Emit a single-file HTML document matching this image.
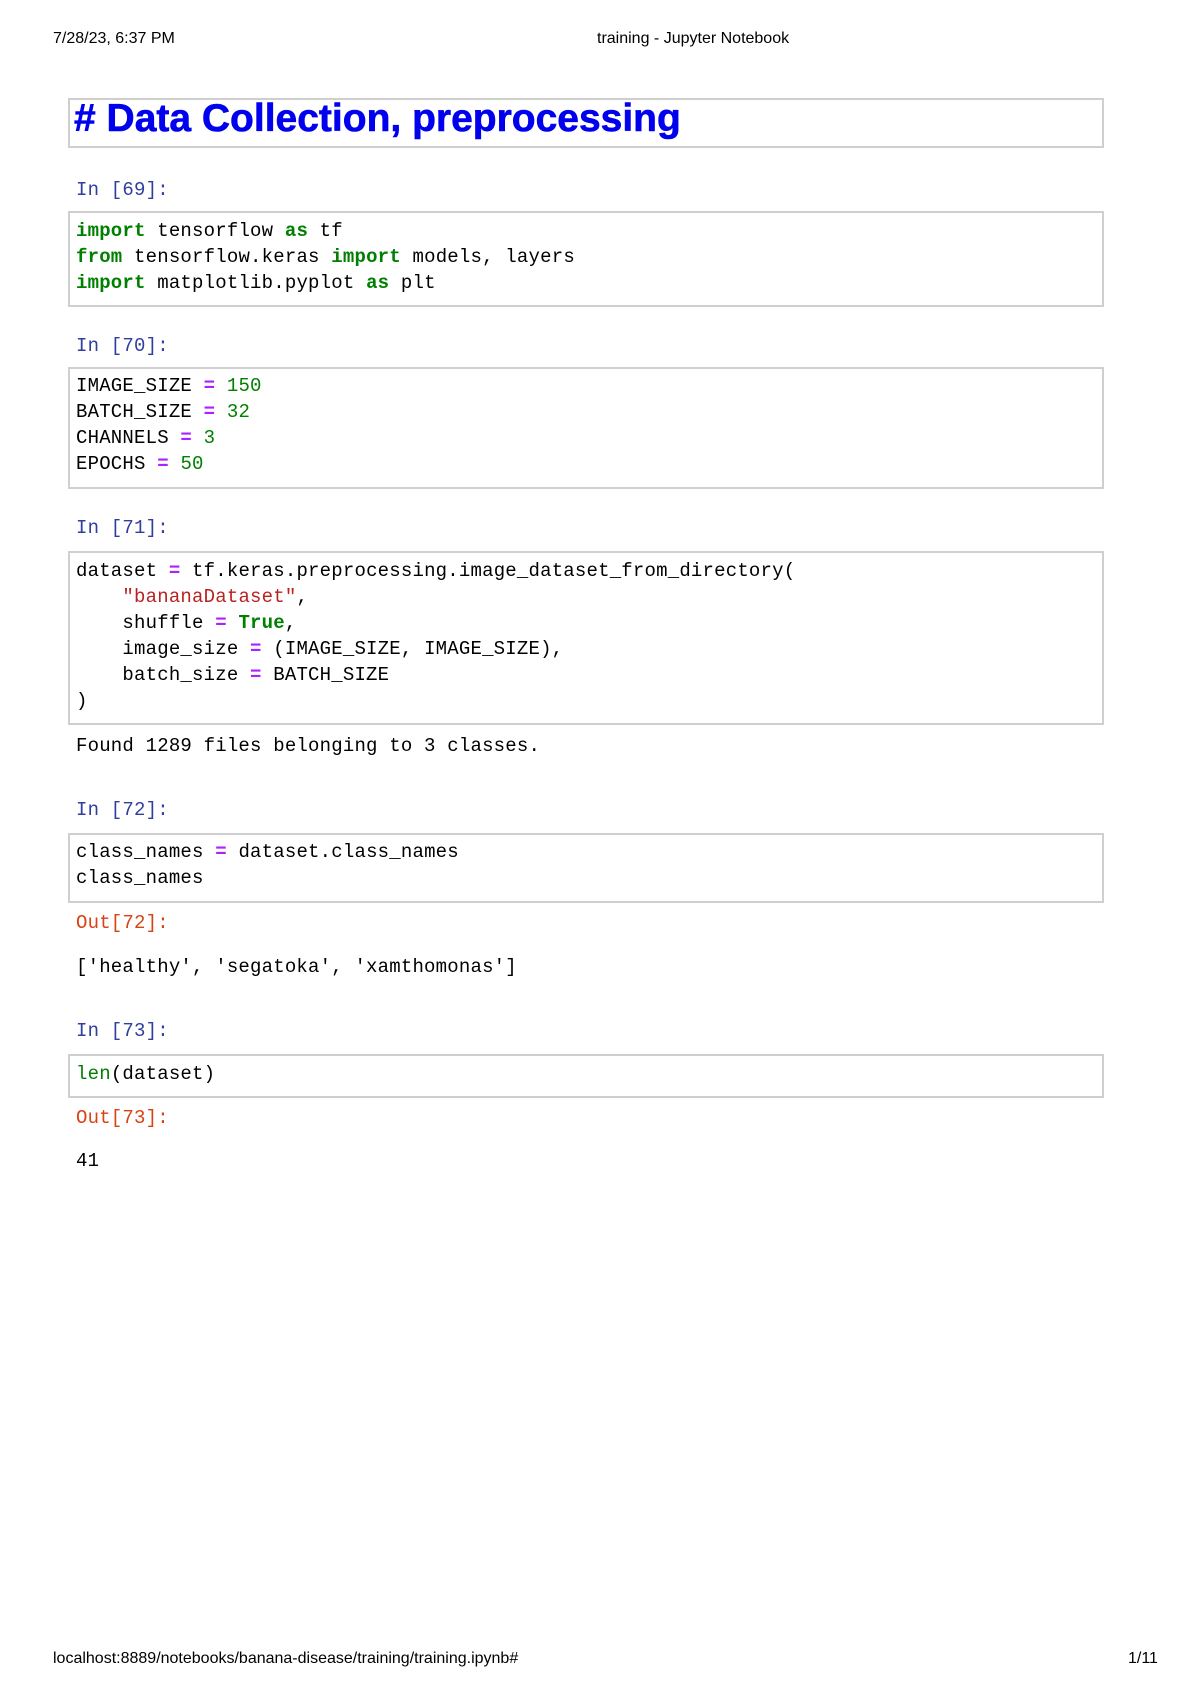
<!DOCTYPE html>
<html><head><meta charset="utf-8"><style>
body{margin:0;width:1200px;height:1698px;background:#fff;position:relative;font-family:"Liberation Sans",sans-serif;}
.a{position:absolute;white-space:pre;}
.hd{font-size:16px;color:#000;}
.box{position:absolute;left:68px;width:1036px;border:2px solid #cfcfcf;box-sizing:border-box;background:#fff;}
.m{font-family:"Liberation Mono",monospace;font-size:19px;letter-spacing:0.2px;line-height:26px;color:#000;}
.in{color:#303F9F;}
.out{color:#D84315;}
.k{color:#008000;font-weight:bold;}
.o{color:#AA22FF;font-weight:bold;}
.n{color:#008000;}
.s{color:#BA2121;}
</style></head><body>
<div class="a hd" style="left:53px;top:30px">7/28/23, 6:37 PM</div>
<div class="a hd" style="left:597px;top:30px">training - Jupyter Notebook</div>

<div class="box" style="top:98px;height:50px"></div>
<div class="a" style="left:74px;top:97px;font-size:39px;font-weight:bold;color:#0000ee;-webkit-text-stroke:0.6px #0000ee">#&nbsp;Data Collection, preprocessing</div>

<div class="a m in" style="left:76px;top:177px">In [69]:</div>
<div class="box" style="top:211px;height:96px"></div>
<div class="a m" style="left:76px;top:218px"><span class="k">import</span> tensorflow <span class="k">as</span> tf
<span class="k">from</span> tensorflow.keras <span class="k">import</span> models, layers
<span class="k">import</span> matplotlib.pyplot <span class="k">as</span> plt</div>

<div class="a m in" style="left:76px;top:333px">In [70]:</div>
<div class="box" style="top:367px;height:122px"></div>
<div class="a m" style="left:76px;top:373px">IMAGE_SIZE <span class="o">=</span> <span class="n">150</span>
BATCH_SIZE <span class="o">=</span> <span class="n">32</span>
CHANNELS <span class="o">=</span> <span class="n">3</span>
EPOCHS <span class="o">=</span> <span class="n">50</span></div>

<div class="a m in" style="left:76px;top:515px">In [71]:</div>
<div class="box" style="top:551px;height:174px"></div>
<div class="a m" style="left:76px;top:558px">dataset <span class="o">=</span> tf.keras.preprocessing.image_dataset_from_directory(
    <span class="s">"bananaDataset"</span>,
    shuffle <span class="o">=</span> <span class="k">True</span>,
    image_size <span class="o">=</span> (IMAGE_SIZE, IMAGE_SIZE),
    batch_size <span class="o">=</span> BATCH_SIZE
)</div>
<div class="a m" style="left:76px;top:733px">Found 1289 files belonging to 3 classes.</div>

<div class="a m in" style="left:76px;top:797px">In [72]:</div>
<div class="box" style="top:833px;height:70px"></div>
<div class="a m" style="left:76px;top:839px">class_names <span class="o">=</span> dataset.class_names
class_names</div>
<div class="a m out" style="left:76px;top:910px">Out[72]:</div>
<div class="a m" style="left:76px;top:954px">['healthy', 'segatoka', 'xamthomonas']</div>

<div class="a m in" style="left:76px;top:1018px">In [73]:</div>
<div class="box" style="top:1054px;height:44px"></div>
<div class="a m" style="left:76px;top:1061px"><span class="n">len</span>(dataset)</div>
<div class="a m out" style="left:76px;top:1105px">Out[73]:</div>
<div class="a m" style="left:76px;top:1148px">41</div>

<div class="a hd" style="left:53px;top:1650px">localhost:8889/notebooks/banana-disease/training/training.ipynb#</div>
<div class="a hd" style="left:1128px;top:1650px">1/11</div>
</body></html>
